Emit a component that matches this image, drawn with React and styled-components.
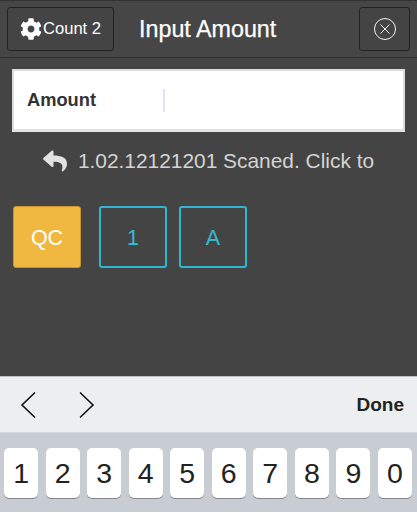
import React from 'react';
import styled, { createGlobalStyle } from 'styled-components';
import { FaCog, FaReply } from 'react-icons/fa';

const Global = createGlobalStyle`
  html, body { margin: 0; padding: 0; background: #444; }
  body { font-family: "Liberation Sans", Arial, sans-serif; }
`;
const Page = styled.div`
  width: 417px; height: 512px; display: flex; flex-direction: column; overflow: hidden; background: #444444;
`;
const Header = styled.header`
  height: 58px; box-sizing: border-box; flex: none; display: flex; align-items: flex-start;
  padding: 6px 7px 0; background: #464646; border-top: 1px solid #333; border-bottom: 1px solid #2e2e2e;
`;
const BarButton = styled.button`
  box-sizing: border-box; height: 44px; width: ${p => p.$w}px;
  display: flex; align-items: center; justify-content: center; gap: 1px; padding: 0;
  background: #444; border: 1px solid #222; border-radius: 3px; color: #fff;
  font: 16.6px "Liberation Sans", sans-serif;
`;
const Title = styled.h1`
  margin: 0 0 0 25px; flex: 1; font-size: 23.3px; font-weight: 400; line-height: 45px; color: #fff;
  -webkit-text-stroke: 0.25px #fff;
`;
const Body = styled.main`
  flex: 1; min-height: 0; display: flex; flex-direction: column; padding: 11px 12px 0;
`;
const InputRow = styled.div`
  box-sizing: border-box; height: 63px; display: flex; align-items: center; background: #fff;
  border: 2px solid #dcdcdc; border-bottom-width: 3px; border-bottom-color: #e4e4e8;
`;
const Label = styled.label`
  width: 149px; padding-left: 13px; box-sizing: border-box; font-size: 18.3px; font-weight: 700; color: #333;
`;
const Caret = styled.span`
  width: 2px; height: 23px; background: #dbe4fb;
`;
const Status = styled.div`
  display: flex; justify-content: center; align-items: center; gap: 11px; height: 30px; margin-top: 14px;
  color: #d4d4d4; font-size: 20.9px; white-space: nowrap;
  svg { color: #e2e2e2; }
`;
const Choices = styled.div`
  display: flex; margin-top: 30px; margin-left: 1px; gap: 12px;
`;
const Choice = styled.button`
  box-sizing: border-box; width: 68px; height: 62px; border-radius: 3px; padding: 3px 0 0;
  margin-right: ${p => p.$first ? 6 : 0}px;
  font: 21.5px "Liberation Sans", sans-serif;
  background: ${p => p.$first ? '#f0b840' : 'transparent'};
  border: ${p => p.$first ? '1px solid #c8942c' : '2px solid #2fb6d2'};
  color: ${p => p.$first ? '#fff' : '#34bcd8'};
`;
const Toolbar = styled.div`
  height: 57px; flex: none; box-sizing: border-box; display: flex; align-items: center;
  padding: 0 13px 0 20px; background: #eceef0; border-top: 1px solid #bdbfc2; border-bottom: 1px solid #d4d6da;
`;
const Chevron = styled.svg`
  width: 16px; height: 28px; margin-right: ${p => p.$gap}px; fill: none; stroke: #111; stroke-width: 1.6;
`;
const Done = styled.span`
  margin-left: auto; font-size: 19px; font-weight: 700; color: #222;
`;
const Keyboard = styled.div`
  height: 79px; flex: none; box-sizing: border-box; background: #c8ccd3; display: flex; gap: 7.35px; padding: 15px 4px 0;
`;
const Key = styled.div`
  width: 34.2px; height: 50px; flex: none; display: flex; align-items: center; justify-content: center;
  background: #fff; border-radius: 5px; box-shadow: 0 1px 0 #85878c; font-size: 28.5px; color: #222;
`;

export default function App() {
  return (
    <Page>
      <Global />
      <Header>
        <BarButton $w={107}><FaCog size={22} />Count 2</BarButton>
        <Title>Input Amount</Title>
        <BarButton $w={51}>
          <svg width="24" height="24" viewBox="0 0 24 24" fill="none" stroke="#f2f2f2" strokeWidth="1">
            <circle cx="12" cy="12" r="10.5" />
            <path d="M7.5 7.5l9 9M16.5 7.5l-9 9" />
          </svg>
        </BarButton>
      </Header>
      <Body>
        <InputRow>
          <Label>Amount</Label>
          <Caret />
        </InputRow>
        <Status><FaReply size={24} />1.02.12121201 Scaned. Click to</Status>
        <Choices>
          <Choice $first>QC</Choice>
          <Choice>1</Choice>
          <Choice>A</Choice>
        </Choices>
      </Body>
      <Toolbar>
        <Chevron $gap={43} viewBox="0 0 16 28"><path d="M15 1.5L2 14l13 12.5" /></Chevron>
        <Chevron $gap={0} viewBox="0 0 16 28"><path d="M1 1.5L14 14 1 26.5" /></Chevron>
        <Done>Done</Done>
      </Toolbar>
      <Keyboard>
        {[1, 2, 3, 4, 5, 6, 7, 8, 9, 0].map(n => <Key key={n}>{n}</Key>)}
      </Keyboard>
    </Page>
  );
}
